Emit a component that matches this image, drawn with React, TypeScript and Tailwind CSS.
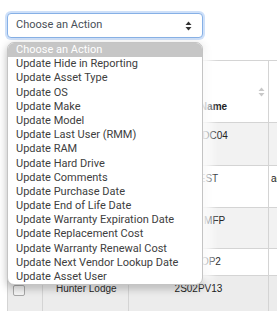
const actions = [
  "Update Hide in Reporting",
  "Update Asset Type",
  "Update OS",
  "Update Make",
  "Update Model",
  "Update Last User (RMM)",
  "Update RAM",
  "Update Hard Drive",
  "Update Comments",
  "Update Purchase Date",
  "Update End of Life Date",
  "Update Warranty Expiration Date",
  "Update Replacement Cost",
  "Update Warranty Renewal Cost",
  "Update Next Vendor Lookup Date",
  "Update Asset User",
];

const rows = [
  { site: "Hunter Lodge", name: "HLSRVDC04", user: "", h: "h-[43px]", bg: "bg-[#f2f2f2]" },
  { site: "Hunter Lodge", name: "PCTEST", user: "admin", h: "h-[42px]", bg: "bg-white" },
  { site: "Hunter Lodge", name: "Printer MFP", user: "", h: "h-[41px]", bg: "bg-[#f2f2f2]" },
  { site: "Hunter Lodge", name: "LAPTOP2", user: "", h: "h-[27px]", bg: "bg-white" },
  { site: "Hunter Lodge", name: "2S02PV13", user: "", h: "h-[40px]", bg: "bg-[#ececec]" },
];

function UpDown({ className }: { className?: string }) {
  return (
    <svg width="7" height="10" viewBox="0 0 7 10" className={className} fill="currentColor">
      <path d="M3.5 0.5 L6.5 4 L0.5 4 Z" />
      <path d="M3.5 9.5 L6.5 6 L0.5 6 Z" />
    </svg>
  );
}

function Checkbox() {
  return <div className="w-[12px] h-[11px] rounded-[2px] border border-[#a8a8a8] bg-[#f4f4f4]" />;
}

export default function App() {
  return (
    <div className="relative h-[311px] w-[277px] overflow-hidden bg-white font-['Roboto',sans-serif]">
      <div className="pl-[7px] pt-[13px]">
        <div className="flex h-[25px] w-[196px] items-center justify-between rounded-[4px] border border-[#86b0e6] bg-white pl-[8px] pr-[10px] text-[11px] text-[#495057] shadow-[0_0_0_2px_rgba(60,130,230,0.25)]">
          <span>Choose an Action</span>
          <UpDown className="text-[#333]" />
        </div>
      </div>

      <div className="ml-[7px] mt-[22px] w-[520px] border-l border-t border-[#d4d4d4] font-['Liberation_Sans',Arial,sans-serif] text-[10px] text-[#222]">
        <div className="flex h-[62px] border-b border-[#d4d4d4] bg-white">
          <div className="w-[35px] border-r border-[#d4d4d4] flex items-end pl-[5px] pb-[9px]">
            <Checkbox />
          </div>
          <div className="w-[86px] border-r border-[#d4d4d4] flex items-end pl-[13px] pb-[8px] font-bold">Site</div>
          <div className="flex w-[140px] border-r border-[#d4d4d4] pr-[3px]">
            <div className="flex-1 self-end pb-[8px] pl-[10px] text-center font-bold">Asset Name</div>
            <UpDown className="self-center text-[#c8c8c8]" />
          </div>
          <div className="flex-1 flex items-end pl-[60px] pb-[8px] font-bold">Last User</div>
        </div>
        {rows.map((r, i) => (
          <div key={i} className={`flex border-b border-[#d4d4d4] ${r.h} ${r.bg}`}>
            <div className="w-[35px] border-r border-[#d4d4d4] flex pl-[5px] pt-[9px]">
              <Checkbox />
            </div>
            <div className="w-[86px] border-r border-[#d4d4d4] pl-[13px] pt-[7px] leading-[12px]">{r.site}</div>
            <div className="w-[140px] border-r border-[#d4d4d4] pt-[7px] leading-[12px] text-center">{r.name}</div>
            <div className="flex-1 pl-[2px] pt-[7px] leading-[12px]">{r.user}</div>
          </div>
        ))}
      </div>

      <div className="absolute left-[7px] top-[42px] w-[196px] rounded-[7px] border border-[#c4c4c4] bg-white text-[11px] text-[#404040] shadow-[12px_0_10px_-4px_rgba(255,255,255,0.9),0_3px_8px_rgba(0,0,0,0.28)]">
        <div className="h-[14.2px] rounded-t-[6px] bg-[#c6c6c6] pl-[8px] leading-[14.2px] text-white">
          Choose an Action
        </div>
        {actions.map((a) => (
          <div key={a} className="h-[14.2px] pl-[8px] leading-[14.2px] whitespace-nowrap">
            {a}
          </div>
        ))}
      </div>
    </div>
  );
}
